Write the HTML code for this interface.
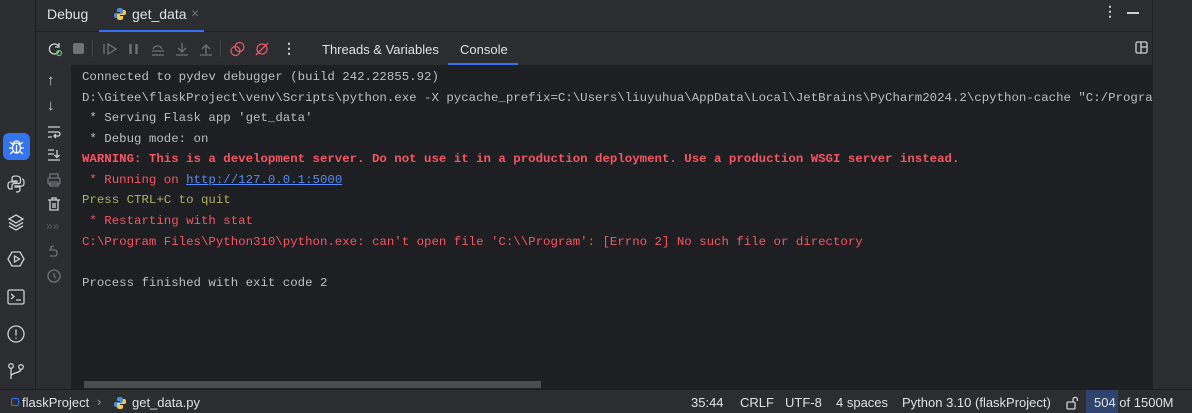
<!DOCTYPE html>
<html><head><meta charset="utf-8"><style>
*{margin:0;padding:0;box-sizing:border-box}
body{width:1192px;height:413px;background:#2b2d30;position:relative;overflow:hidden;font-family:"Liberation Sans",sans-serif;color:#dfe1e5}
.abs{position:absolute}
.console{left:71px;top:65px;width:1081px;height:325px;background:#1e1f22}
.ln{position:absolute;left:82px;font-family:"Liberation Mono",monospace;font-size:12.4px;white-space:pre;color:#bcbec4}
.red{color:#f75464}
.yel{color:#b3ae60}
a{color:#548af7;text-decoration:underline}
.ui{font-size:13px;color:#dfe1e5}
.ico{position:absolute;stroke:#ced0d6;fill:none;stroke-width:1.3}
.dim{stroke:#6f737a}
</style></head><body>
<div class="abs" style="left:35px;top:31px;width:1118px;height:1px;background:#1e1f22"></div>
<div class="abs" style="left:35px;top:0;width:1px;height:390px;background:#1e1f22"></div>
<div class="abs" style="left:1152px;top:0;width:1px;height:390px;background:#1e1f22"></div>
<div class="abs" style="left:0;top:389px;width:1192px;height:1px;background:#1e1f22"></div>
<div class="abs ui" style="left:47px;top:6px;font-size:14px">Debug</div>
<svg class="abs" style="left:113px;top:7px" width="14" height="14" viewBox="0 0 14 14"><path d="M7 1C4 1 4 2 4 3v2h3v1H2.5C1 6 1 8 1 8.5S1 11 2.5 11H4V9c0-1 1-2 2-2h3c1 0 1-1 1-1V3c0-1-1-2-3-2z" fill="#4d8ad6"/><path d="M7 13c3 0 3-1 3-2V9H7V8h4.5C13 8 13 6 13 5.5S13 3 11.5 3H10v2c0 1-1 2-2 2H5c-1 0-1 1-1 1v3c0 1 1 2 3 2z" fill="#f2c94c"/></svg>
<div class="abs ui" style="left:132px;top:6px;font-size:14px">get_data</div>
<div class="abs" style="left:191px;top:5px;color:#6f737a;font-size:14px">×</div>
<div class="abs" style="left:99px;top:30px;width:105px;height:2px;background:#3574f0"></div>
<div class="abs" style="left:1103px;top:3px;color:#ced0d6;font-size:14px;font-weight:bold">⋮</div>
<div class="abs" style="left:1127px;top:12px;width:12px;height:1.5px;background:#ced0d6"></div>
<!-- toolbar -->
<svg class="ico" style="left:47px;top:41px" width="16" height="16"><path d="M12 6A5 5 0 1 0 12 10" stroke="#ced0d6"/><path d="M12 2v4H8" stroke="#ced0d6"/><circle cx="12" cy="12" r="2.5" stroke="#5fb865"/></svg>
<div class="abs" style="left:73px;top:43px;width:11px;height:11px;background:#6f737a;border-radius:2px"></div>
<div class="abs" style="left:92px;top:40px;width:1px;height:17px;background:#43454a"></div>
<svg class="ico dim" style="left:102px;top:41px" width="16" height="16"><path d="M2 3v10M6 3l8 5-8 5z"/></svg>
<svg class="ico dim" style="left:126px;top:41px" width="16" height="16"><path d="M4 3v10M5 3v10M10 3v10M11 3v10"/></svg>
<svg class="ico dim" style="left:150px;top:41px" width="16" height="16"><path d="M2 10h12M2 14h12M3 8c2-4 7-4 9 0"/></svg>
<svg class="ico dim" style="left:174px;top:41px" width="16" height="16"><path d="M8 2v9M4 7l4 4 4-4M2 14h12"/></svg>
<svg class="ico dim" style="left:198px;top:41px" width="16" height="16"><path d="M8 13V4M4 8l4-4 4 4M2 14h12"/></svg>
<div class="abs" style="left:220px;top:40px;width:1px;height:17px;background:#43454a"></div>
<svg class="ico" style="left:229px;top:41px" width="17" height="17"><circle cx="6.5" cy="10" r="4.5" stroke="#e55765"/><circle cx="10.5" cy="6" r="4.5" stroke="#e55765"/></svg>
<svg class="ico" style="left:254px;top:41px" width="16" height="16"><circle cx="8" cy="8" r="5" stroke="#e55765"/><path d="M2 14L14 2" stroke="#e55765"/></svg>
<div class="abs" style="left:282px;top:40px;color:#ced0d6;font-size:14px;font-weight:bold">⋮</div>
<div class="abs ui" style="left:322px;top:42px">Threads &amp; Variables</div>
<div class="abs ui" style="left:460px;top:42px">Console</div>
<div class="abs" style="left:448px;top:63px;width:70px;height:2px;background:#3574f0"></div>
<svg class="ico" style="left:1135px;top:41px" width="14" height="14"><rect x="1" y="1" width="11" height="11" rx="1.5"/><path d="M6 1v11M6 6h6"/></svg>
<!-- side column icons -->
<div class="abs" style="left:47px;top:72px;color:#ced0d6;font-size:15px">↑</div>
<div class="abs" style="left:47px;top:97px;color:#ced0d6;font-size:15px">↓</div>
<svg class="ico" style="left:46px;top:124px" width="16" height="16"><path d="M2 3h12M2 8h10a2 2 0 0 1 0 4h-3M2 13h4M10 10l-2 2 2 2"/></svg>
<svg class="ico" style="left:46px;top:147px" width="16" height="16"><path d="M2 3h6M2 7h6M2 13h12M11 3v7M8.5 8l2.5 2.5L13.5 8"/></svg>
<svg class="ico dim" style="left:46px;top:172px" width="16" height="16"><rect x="2" y="6" width="12" height="6" rx="1"/><path d="M4 6V2h8v4M4 10h8v4H4z"/></svg>
<svg class="ico" style="left:46px;top:196px" width="16" height="16"><path d="M2 4h12M6 4V2h4v2M4 4v10h8V4M7 7v5M9 7v5"/></svg>
<div class="abs" style="left:46px;top:219px;color:#5a5d63;font-size:12px">»»</div>
<svg class="ico dim" style="left:46px;top:244px" width="16" height="16"><path d="M8 2C5 2 5 3 5 4v2h4M3 6h6c1 0 2 1 2 2v2c0 1-1 2-2 2H4" /></svg>
<svg class="ico dim" style="left:46px;top:268px" width="16" height="16"><circle cx="8" cy="8" r="6"/><path d="M8 5v3l2 2"/></svg>
<!-- left strip -->
<div class="abs" style="left:3px;top:133px;width:27px;height:27px;background:#3574f0;border-radius:6px"></div>
<svg class="ico" style="left:6px;top:136px;stroke:#fff" width="21" height="21"><ellipse cx="10.5" cy="12" rx="4" ry="5"/><path d="M7 8a3.5 3 0 0 1 7 0M3 12h3.5M14.5 12H18M4 6l3 2.5M17 6l-3 2.5M4 18l3-2.5M17 18l-3-2.5M10.5 9v8"/></svg>
<svg class="ico" style="left:6px;top:174px" width="20" height="20"><path d="M10 2c-4 0-4 1.5-4 3v2h5v1H4c-2 0-2 3-2 3.5S2 15 4 15h2v-3c0-1.5 1-2.5 2.5-2.5h4c1.5 0 2-1 2-2V5c0-2-2-3-4.5-3zM10 18c4 0 4-1.5 4-3v-2H9v-1h7c2 0 2-3 2-3.5S18 5 16 5"/></svg>
<svg class="ico" style="left:6px;top:212px" width="20" height="20"><path d="M10 3l7 4-7 4-7-4zM3 10.5l7 4 7-4M3 14l7 4 7-4"/></svg>
<svg class="ico" style="left:6px;top:249px" width="20" height="20"><path d="M6 3h8l4 7-4 7H6l-4-7z"/><path d="M8.5 7v6l5-3z"/></svg>
<svg class="ico" style="left:6px;top:287px" width="20" height="20"><rect x="2" y="3" width="16" height="14" rx="1.5"/><path d="M5 7l3 2.5L5 12M10 13h5"/></svg>
<svg class="ico" style="left:6px;top:324px" width="20" height="20"><circle cx="10" cy="10" r="8"/><path d="M10 5.5v6M10 13.5v1.2"/></svg>
<svg class="ico" style="left:6px;top:361px" width="20" height="20"><circle cx="5" cy="5" r="2.3"/><circle cx="15" cy="6" r="2.3"/><path d="M5 7.3V18M15 8.3c0 4-10 3-10 7"/></svg>
<!-- console -->
<div class="abs console"></div>
<div class="ln" style="top:70px">Connected to pydev debugger (build 242.22855.92)</div>
<div class="ln" style="top:91px">D:\Gitee\flaskProject\venv\Scripts\python.exe -X pycache_prefix=C:\Users\liuyuhua\AppData\Local\JetBrains\PyCharm2024.2\cpython-cache "C:/Progra</div>
<div class="ln" style="top:111px"> * Serving Flask app 'get_data'</div>
<div class="ln" style="top:132px"> * Debug mode: on</div>
<div class="ln red" style="top:152px;font-weight:bold">WARNING: This is a development server. Do not use it in a production deployment. Use a production WSGI server instead.</div>
<div class="ln red" style="top:173px"> * Running on <a>http://127.0.0.1:5000</a></div>
<div class="ln yel" style="top:193px">Press CTRL+C to quit</div>
<div class="ln red" style="top:214px"> * Restarting with stat</div>
<div class="ln red" style="top:235px">C:\Program Files\Python310\python.exe: can't open file 'C:\\Program': [Errno 2] No such file or directory</div>
<div class="ln" style="top:276px">Process finished with exit code 2</div>
<div class="abs" style="left:84px;top:381px;width:457px;height:7px;background:#4a4c50"></div>
<!-- status bar -->
<div class="abs" style="left:11px;top:398px;width:8px;height:8px;border:1.5px solid #3574f0;border-radius:2px"></div>
<div class="abs ui" style="left:22px;top:395px">flaskProject</div>
<div class="abs ui" style="left:97px;top:394px;color:#9a9da3">›</div>
<svg class="abs" style="left:113px;top:396px" width="14" height="14" viewBox="0 0 14 14"><path d="M7 1C4 1 4 2 4 3v2h3v1H2.5C1 6 1 8 1 8.5S1 11 2.5 11H4V9c0-1 1-2 2-2h3c1 0 1-1 1-1V3c0-1-1-2-3-2z" fill="#4d8ad6"/><path d="M7 13c3 0 3-1 3-2V9H7V8h4.5C13 8 13 6 13 5.5S13 3 11.5 3H10v2c0 1-1 2-2 2H5c-1 0-1 1-1 1v3c0 1 1 2 3 2z" fill="#f2c94c"/></svg>
<div class="abs ui" style="left:132px;top:395px">get_data.py</div>
<div class="abs ui" style="left:691px;top:395px">35:44</div>
<div class="abs ui" style="left:740px;top:395px">CRLF</div>
<div class="abs ui" style="left:785px;top:395px">UTF-8</div>
<div class="abs ui" style="left:836px;top:395px">4 spaces</div>
<div class="abs ui" style="left:902px;top:395px">Python 3.10 (flaskProject)</div>
<svg class="ico" style="left:1065px;top:396px" width="14" height="14"><rect x="2" y="6" width="8" height="7" rx="1"/><path d="M8 6V3.5a2.2 2.2 0 0 1 4.4 0V5"/></svg>
<div class="abs" style="left:1086px;top:390px;width:32px;height:23px;background:#2e436e"></div>
<div class="abs ui" style="left:1094px;top:395px">504 of 1500M</div>
</body></html>
